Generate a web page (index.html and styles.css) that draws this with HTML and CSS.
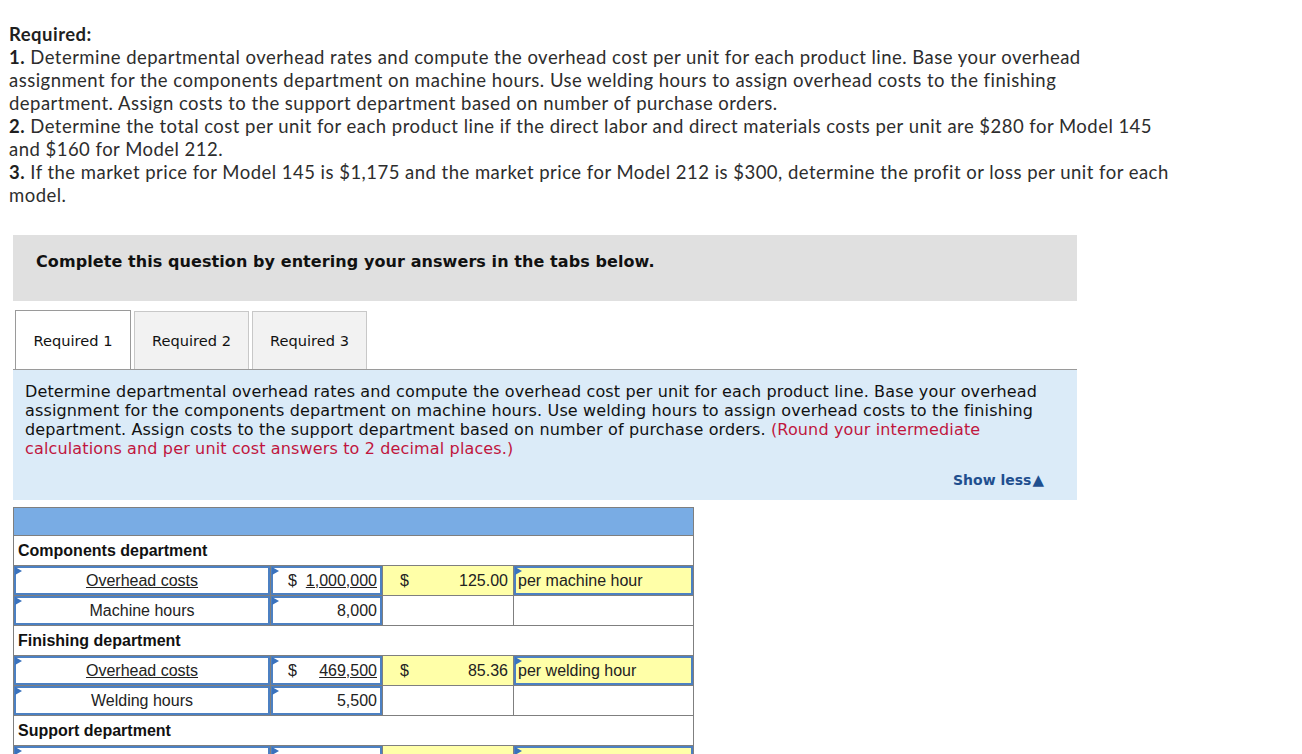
FILE: index.html
```html
<!DOCTYPE html>
<html>
<head>
<meta charset="utf-8">
<link rel="stylesheet" href="styles.css">
</head>
<body>
<div class="question">
  <p><b>Required:</b><br>
  <b>1.</b> Determine departmental overhead rates and compute the overhead cost per unit for each product line. Base your overhead assignment for the components department on machine hours. Use welding hours to assign overhead costs to the finishing<br>department. Assign costs to the support department based on number of purchase orders.<br>
  <b>2.</b> Determine the total cost per unit for each product line if the direct labor and direct materials costs per unit are $280 for Model 145 and $160 for Model 212.<br>
  <b>3.</b> If the market price for Model 145 is $1,175 and the market price for Model 212 is $300, determine the profit or loss per unit for each model.</p>
</div>

<div class="work">
  <div class="banner">Complete this question by entering your answers in the tabs below.</div>

  <div class="tabs">
    <div class="tab active">Required 1</div>
    <div class="tab">Required 2</div>
    <div class="tab">Required 3</div>
  </div>

  <div class="panel">
    <p>Determine departmental overhead rates and compute the overhead cost per unit for each product line. Base your overhead assignment for the components department on machine hours. Use welding hours to assign overhead costs to the finishing department. Assign costs to the support department based on number of purchase orders. <span class="red">(Round your intermediate calculations and per unit cost answers to 2 decimal places.)</span></p>
    <div class="showless">Show less<span class="tri">&#9650;</span></div>
  </div>

  <table class="sheet">
    <colgroup>
      <col class="c1"><col class="c2"><col class="c3"><col class="c4">
    </colgroup>
    <tr class="head"><td colspan="4"></td></tr>
    <tr><td colspan="4" class="sec">Components department</td></tr>
    <tr>
      <td class="in center"><u>Overhead costs</u></td>
      <td class="in money"><span>$</span><span><u>1,000,000</u></span></td>
      <td class="yel money"><span>$</span><span>125.00</span></td>
      <td class="in yel lbl">per machine hour</td>
    </tr>
    <tr>
      <td class="in center">Machine hours</td>
      <td class="in money"><span></span><span>8,000</span></td>
      <td></td>
      <td></td>
    </tr>
    <tr><td colspan="4" class="sec">Finishing department</td></tr>
    <tr>
      <td class="in center"><u>Overhead costs</u></td>
      <td class="in money"><span>$</span><span><u>469,500</u></span></td>
      <td class="yel money"><span>$</span><span>85.36</span></td>
      <td class="in yel lbl">per welding hour</td>
    </tr>
    <tr>
      <td class="in center">Welding hours</td>
      <td class="in money"><span></span><span>5,500</span></td>
      <td></td>
      <td></td>
    </tr>
    <tr><td colspan="4" class="sec">Support department</td></tr>
    <tr>
      <td class="in"></td>
      <td class="in"></td>
      <td class="yel"></td>
      <td class="in yel"></td>
    </tr>
  </table>
</div>
</body>
</html>
```

FILE: styles.css
```css
html, body {
  margin: 0;
  padding: 0;
  background: #ffffff;
}

.question {
  padding: 23px 0 0 9px;
  width: 1160px;
  font-family: Lato, "Liberation Sans", sans-serif;
  font-size: 18.5px;
  letter-spacing: 0.47px;
  line-height: 23px;
  color: #2d2d2d;
}

.question p {
  margin: 0;
}

.question b {
  font-weight: 700;
  color: #1f1f1f;
}

.work {
  margin: 28px 0 0 13px;
  width: 1064px;
}

.banner {
  height: 66px;
  box-sizing: border-box;
  background: #e0e0e0;
  padding: 17px 23px 0;
  font-family: "DejaVu Sans", Verdana, sans-serif;
  font-weight: bold;
  font-size: 16px;
  letter-spacing: 0.08px;
  line-height: 20px;
  color: #111;
}

.tabs {
  margin-top: 9px;
  display: flex;
  align-items: flex-end;
  gap: 3px;
  padding-left: 2px;
  border-bottom: 1px solid #9a9a9a;
  height: 59px;
}

.tab {
  height: 58px;
  box-sizing: border-box;
  width: 115px;
  border: 1px solid #c8c8c8;
  border-bottom: none;
  background: #f2f2f2;
  display: flex;
  align-items: center;
  justify-content: center;
  font-family: "DejaVu Sans", Verdana, sans-serif;
  font-size: 14.6px;
  color: #111;
}

.tab.active {
  width: 116px;
  height: 59px;
  background: #ffffff;
  border-color: #9a9a9a;
}

.panel {
  background: #dbebf8;
  height: 130px;
  box-sizing: border-box;
  padding: 12px 33px 0 12px;
  font-family: "DejaVu Sans", Verdana, sans-serif;
  font-size: 16px;
  letter-spacing: 0.14px;
  line-height: 19px;
  color: #111;
}

.panel p {
  margin: 0;
}

.red {
  color: #c0163e;
}

.showless {
  margin-top: 13px;
  text-align: right;
  font-family: "DejaVu Sans", Verdana, sans-serif;
  font-weight: bold;
  font-size: 14px;
  letter-spacing: 0;
  line-height: 19px;
  color: #1f4f8f;
}

.showless .tri {
  font-size: 15px;
  margin-left: 1px;
}

.sheet {
  margin-top: 7px;
  border-collapse: collapse;
  table-layout: fixed;
  width: 680px;
  font-family: "Liberation Sans", Arial, sans-serif;
  font-size: 16px;
  color: #222;
  border: 1px solid #7f7f7f;
}

.c1 { width: 257px; }
.c2 { width: 112px; }
.c3 { width: 131px; }
.c4 { width: 180px; }

.sheet td {
  border: 1px solid #7f7f7f;
  height: 30px;
  padding: 0;
  box-sizing: border-box;
}

.sheet tr.head td {
  background: #79ace4;
  height: 28px;
}

.sheet td.sec {
  font-weight: bold;
  padding-left: 4px;
  color: #111;
}

.sheet td.in {
  position: relative;
  box-shadow: inset 0 0 0 2px #4c80c2;
}

.sheet td.in::before {
  content: "";
  position: absolute;
  left: 1px;
  top: 1px;
  border-left: 7px solid #3a72bd;
  border-top: 4px solid transparent;
  border-bottom: 4px solid transparent;
}

.sheet td.center {
  text-align: center;
}

.sheet td.money {
  padding: 0 5px 0 17px;
}

.sheet td.money span:first-child {
  float: left;
}

.sheet td.money span:last-child {
  float: right;
}

.sheet td.yel {
  background: #ffffa8;
}

.sheet td.lbl {
  padding-left: 4px;
}
```
